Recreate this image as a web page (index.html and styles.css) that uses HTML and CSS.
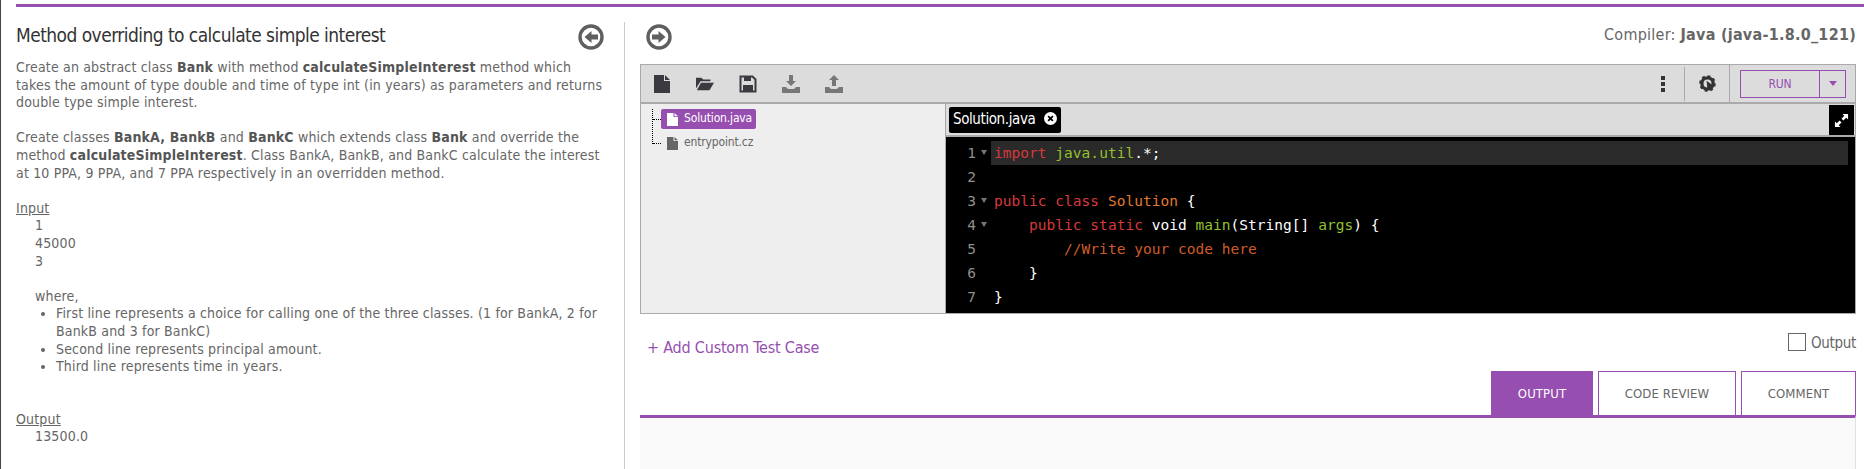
FILE: index.html
```html
<!DOCTYPE html>
<html lang="en">
<head>
<meta charset="utf-8">
<title>Method overriding</title>
<link rel="stylesheet" href="styles.css">
</head>
<body>
<div class="page">
  <section class="problem">
    <div class="problem-inner">
      <div class="problem-head">
        <h1>Method overriding to calculate simple interest</h1>
        <svg class="circle-icon" viewBox="0 0 26 26"><circle cx="13" cy="13" r="11" fill="none" stroke="#5f5f5f" stroke-width="3.4"/><path d="M20 10.500h-6.500V7L6.500 13l7 6v-3.500H20z" fill="#5f5f5f"/></svg>
      </div>
      <div class="statement">
        <p>Create an abstract class <b>Bank</b> with method <b>calculateSimpleInterest</b> method which<br>takes the amount of type double and time of type int (in years) as parameters and returns<br>double type simple interest.</p>
        <p>Create classes <b>BankA, BankB</b> and <b>BankC</b> which extends class <b>Bank</b> and override the<br>method <b>calculateSimpleInterest</b>. Class BankA, BankB, and BankC calculate the interest<br>at 10 PPA, 9 PPA, and 7 PPA respectively in an overridden method.</p>
        <p class="label">Input</p>
        <div class="indent">
          <div>1</div>
          <div>45000</div>
          <div>3</div>
          <div class="where">where,</div>
          <ul>
            <li>First line represents a choice for calling one of the three classes. (1 for BankA, 2 for<br>BankB and 3 for BankC)</li>
            <li>Second line represents principal amount.</li>
            <li>Third line represents time in years.</li>
          </ul>
        </div>
        <p class="label output-label">Output</p>
        <div class="indent">13500.0</div>
      </div>
    </div>
  </section>
  <section class="workspace">
    <div class="work-head">
      <svg class="circle-icon" viewBox="0 0 26 26"><circle cx="13" cy="13" r="11" fill="none" stroke="#5f5f5f" stroke-width="3.4"/><path d="M6 10.500h6.500V7l7 6-7 6v-3.500H6z" fill="#5f5f5f"/></svg>
      <div class="compiler">Compiler: <b>Java (java-1.8.0_121)</b></div>
    </div>
    <div class="ide">
      <div class="toolbar">
        <svg class="tool" viewBox="0 0 18 18"><path d="M1 0h10v6h6v12H1z" fill="#3a3a40"/><path d="M12 0l5 5h-5z" fill="#3a3a40"/></svg>
        <svg class="tool" viewBox="0 0 20 18"><path d="M0 2h6l2 2h8v2H5L0 14z" fill="#3a3a40"/><path d="M5.500 7.500H20L15 16H1z" fill="#3a3a40"/></svg>
        <svg class="tool" viewBox="0 0 18 18"><path d="M1.500 1.500h12l3 3v12h-15z" fill="none" stroke="#3a3a40" stroke-width="2"/><path d="M5 2h7v4H5zM4 10h10v6H4z" fill="#3a3a40"/></svg>
        <svg class="tool" viewBox="0 0 18 18"><path d="M7 0h4v6h3l-5 5-5-5h3z" fill="#777"/><path d="M0 12h4l2 2h6l2-2h4v6H0z" fill="#777"/></svg>
        <svg class="tool" viewBox="0 0 18 18"><path d="M9 0l5 5h-3v6H7V5H4z" fill="#777"/><path d="M0 12h4l2 2h6l2-2h4v6H0z" fill="#777"/></svg>
        <div class="tool-right">
          <div class="dots"><i></i><i></i><i></i></div>
          <div class="gear-cell">
            <svg class="gear" viewBox="0 0 18 18"><circle cx="9" cy="9" r="6" fill="none" stroke="#333" stroke-width="3.500" /><circle cx="9" cy="9" r="7.800" fill="none" stroke="#333" stroke-width="2" stroke-dasharray="3 3.100"/><path d="M8 6l7 5-6 5z" fill="#333"/></svg>
          </div>
          <div class="run">
            <span class="run-label">RUN</span>
            <span class="run-caret"><i></i></span>
          </div>
        </div>
      </div>
      <div class="ide-body">
        <div class="tree">
          <div class="tree-rail"></div>
          <div class="tree-row">
            <span class="tick"></span>
            <span class="file active"><svg class="fico" viewBox="0 0 11 13"><path d="M0 0h6.500v4H11v9H0zM7.500 0L11 3.300H7.500z" fill="#fff"/></svg>Solution.java</span>
          </div>
          <div class="tree-row">
            <span class="tick"></span>
            <span class="file"><svg class="fico" viewBox="0 0 11 13"><path d="M0 0h6.500v4H11v9H0zM7.500 0L11 3.300H7.500z" fill="#666"/></svg>entrypoint.cz</span>
          </div>
        </div>
        <div class="editor">
          <div class="tabbar">
            <div class="ed-tab">Solution.java<svg class="tab-x" viewBox="0 0 12 12"><circle cx="6" cy="6" r="6" fill="#fff"/><path d="M3.800 3.800l4.400 4.400M8.200 3.800l-4.400 4.400" stroke="#000" stroke-width="1.600"/></svg></div>
            <div class="expand"><svg viewBox="0 0 16 16"><path d="M9 1h6v6l-2-2-3 3-2-2 3-3zM7 15H1V9l2 2 3-3 2 2-3 3z" fill="#fff"/></svg></div>
          </div>
          <div class="code">
            <div class="line current"><span class="num">1</span><span class="fold"><i></i></span><span class="src"><span class="k">import</span> <span class="s">java.util</span>.*;</span></div>
            <div class="line"><span class="num">2</span><span class="fold"></span><span class="src"></span></div>
            <div class="line"><span class="num">3</span><span class="fold"><i></i></span><span class="src"><span class="k">public class</span> <span class="t">Solution</span> {</span></div>
            <div class="line"><span class="num">4</span><span class="fold"><i></i></span><span class="src">    <span class="k">public static</span> void <span class="f">main</span>(String[] <span class="s">args</span>) {</span></div>
            <div class="line"><span class="num">5</span><span class="fold"></span><span class="src">        <span class="c">//Write your code here</span></span></div>
            <div class="line"><span class="num">6</span><span class="fold"></span><span class="src">    }</span></div>
            <div class="line"><span class="num">7</span><span class="fold"></span><span class="src">}</span></div>
          </div>
        </div>
      </div>
    </div>
    <div class="custom-row">
      <a class="add-case">+ Add Custom Test Case</a>
      <label class="out-check"><span class="box"></span>Output</label>
    </div>
    <div class="tabs">
      <div class="tab on">OUTPUT</div>
      <div class="tab review">CODE REVIEW</div>
      <div class="tab comment">COMMENT</div>
    </div>
    <div class="result"></div>
  </section>
</div>
</body>
</html>
```
FILE: styles.css
```css
* { box-sizing: border-box; }
html, body { margin: 0; height: 100%; overflow: hidden; background: #fff; }
body { font-family: "DejaVu Sans Condensed", "DejaVu Sans", "Noto Sans", sans-serif; font-stretch: condensed; font-size: 14px; line-height: 17.6px; color: #666; }
.page { display: flex; height: 469px; border-left: 1px solid #444; padding-left: 15px; }
.page::before { content: ""; position: absolute; left: 16px; right: 0; top: 4px; height: 3px; background: #964eb0; }
.problem { width: 608px; padding-top: 22px; }
.problem-head { display: flex; justify-content: space-between; align-items: center; height: 30px; padding-right: 20px; }
h1 { margin: 0; font-size: 19px; font-weight: 400; color: #333; letter-spacing: -0.55px; line-height: 26px; margin-top: -4px; }
.circle-icon { width: 26px; height: 26px; display: block; }
.statement { margin-top: 7px; width: 592px; letter-spacing: 0.17px; white-space: nowrap; }
.statement p { margin: 0 0 17.6px; }
.statement b { color: #555; }
.statement .label { margin: 0; text-decoration: underline; }
.statement .output-label { margin-top: 35.2px; }
.indent { padding-left: 19px; }
.where { margin-top: 17.6px; }
ul { margin: 0; padding-left: 21px; }
.workspace { flex: 1; padding: 0 8px 0 15px; border-left: 1px solid #ccc; margin-top: 22px; display: flex; flex-direction: column; }
.work-head { display: flex; justify-content: space-between; align-items: center; height: 30px; padding-left: 6px; }
.compiler { font-size: 16px; letter-spacing: 0.25px; margin-top: -5px; }
.ide { margin-top: 12px; height: 250px; border: 1px solid #aaa; display: flex; flex-direction: column; flex: none; }
.toolbar { height: 39px; background: #dcdcdc; border-bottom: 2px solid #aaa; display: flex; align-items: center; padding-left: 12px; gap: 25px; flex: none; }
.tool { width: 18px; height: 18px; display: block; }
.tool-right { margin-left: auto; display: flex; align-items: center; height: 100%; }
.dots { width: 44px; display: flex; flex-direction: column; align-items: center; gap: 2px; border-right: 1px solid #aaa; height: 34px; justify-content: center; }
.dots i { width: 4px; height: 4px; background: #333; display: block; }
.gear-cell { width: 45px; height: 100%; border-right: 1px solid #aaa; display: flex; align-items: center; justify-content: center; }
.gear { width: 17px; height: 17px; }
.run { margin: 0 9px 0 10px; width: 106px; height: 28px; border: 1px solid #964eb0; display: flex; color: #964eb0; font-size: 12px; letter-spacing: -0.1px; }
.run-label { flex: 1; text-align: center; line-height: 26px; }
.run-caret { width: 26px; border-left: 1px solid #964eb0; display: flex; align-items: center; justify-content: center; }
.run-caret i { width: 0; height: 0; border: 4px solid transparent; border-top: 5px solid #964eb0; border-bottom: 0; }
.ide-body { flex: 1; display: flex; min-height: 0; }
.tree { width: 305px; background: #eee; border-right: 1px solid #aaa; padding: 3px 0 0 12px; position: relative; font-size: 12px; letter-spacing: -0.15px; }
.tree-rail { position: absolute; left: 11px; top: 5px; height: 35px; border-left: 1px dotted #000; }
.tree-row { display: flex; align-items: center; height: 24px; }
.tick { width: 8px; border-top: 1px dotted #000; }
.file { display: flex; align-items: center; height: 20px; padding: 0 4px 0 6px; border-radius: 2px; gap: 6px; }
.file.active { background: #964eb0; color: #fff; }
.fico { width: 11px; height: 13px; }
.editor { flex: 1; display: flex; flex-direction: column; min-width: 0; background: #000; }
.tabbar { height: 33px; flex: none; background: #dcdcdc; border-bottom: 2px solid #aaa; padding: 1px 1px 0 3px; display: flex; justify-content: space-between; align-items: flex-start; }
.ed-tab { height: 26px; margin-top: 2px; background: #000; color: #fff; font-size: 15px; padding: 0 4px; display: flex; align-items: center; gap: 9px; letter-spacing: -0.4px; border-radius: 2px; }
.tab-x { width: 13px; height: 13px; margin-top: -3px; }
.expand { width: 25px; height: 30px; background: #000; display: flex; align-items: center; justify-content: center; }
.expand svg { width: 15px; height: 15px; }
.code { flex: 1; padding: 4px 7px 0 0; font-family: "DejaVu Sans Mono", monospace; font-stretch: normal; font-size: 14.5px; letter-spacing: 0.03px; line-height: 24px; color: #fff; }
.line { display: flex; height: 24px; white-space: pre; }
.num { width: 30px; text-align: right; color: #8f908a; }
.fold { width: 15px; display: flex; justify-content: center; padding: 9px 0 0 0; }
.fold i { width: 0; height: 0; border: 3.5px solid transparent; border-top: 5px solid #777; border-bottom: 0; }
.src { flex: 1; padding-left: 3px; }
.current .src { background: #2a2a2a; }
.k { color: #d8383c; }
.s { color: #93c02c; }
.t { color: #e07a30; }
.f { color: #93c02c; }
.c { color: #cf5c28; }
.custom-row { display: flex; justify-content: space-between; align-items: center; height: 57px; flex: none; }
.add-case { color: #964eb0; font-size: 16px; padding: 11px 0 0 7px; letter-spacing: -0.2px; }
.out-check { display: flex; align-items: center; gap: 5px; font-size: 15px; letter-spacing: -0.3px; padding-top: 2px; }
.box { width: 18px; height: 18px; border: 1px solid #666; margin-top: -4px; }
.tabs { display: flex; justify-content: flex-end; gap: 5px; height: 44px; flex: none; }
.tab { height: 44px; display: flex; align-items: center; justify-content: center; font-size: 13px; border: 1px solid #964eb0; border-bottom: 0; letter-spacing: 0.1px; }
.tab.on { width: 102px; background: #964eb0; color: #fff; }
.tab.review { width: 138px; }
.tab.comment { width: 115px; }
.result { flex: 1; background: #f9f9f9; border-top: 3px solid #964eb0; border-right: 1px solid #e0e0e0; }
```
